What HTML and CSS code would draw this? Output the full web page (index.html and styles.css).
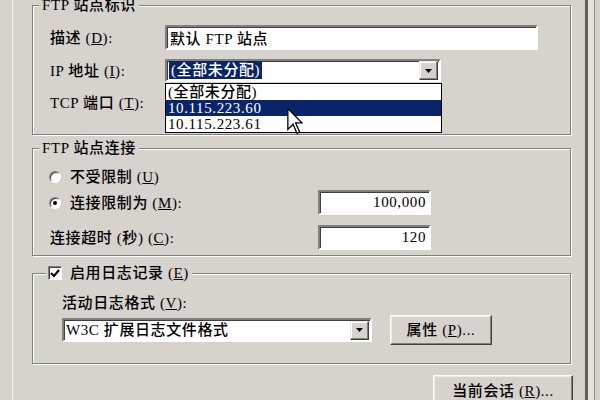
FILE: index.html
```html
<!DOCTYPE html>
<html lang="zh-CN">
<head>
<meta charset="utf-8">
<title>FTP 站点属性</title>
<link rel="stylesheet" href="styles.css">
</head>
<body>
<div class="screen">
  <div class="edge-left"></div>
  <div class="main">
    <fieldset class="group g1">
      <legend>FTP 站点标识</legend>
      <div class="g1-body">
        <label class="lbl">描述 (<u>D</u>):</label>
        <input class="field f-desc" type="text" value="默认 FTP 站点" readonly>
        <label class="lbl">IP 地址 (<u>I</u>):</label>
        <div class="combo c-ip" role="combobox">
          <div class="combo-text"><span class="hl">(全部未分配)</span></div>
          <div class="arrow"><svg width="7" height="4" viewBox="0 0 7 4"><polygon points="0,0 7,0 3.5,4" fill="#000"/></svg></div>
          <div class="dropdown" role="listbox">
            <div class="item">(全部未分配)</div>
            <div class="item sel">10.115.223.60</div>
            <div class="item">10.115.223.61</div>
          </div>
        </div>
        <label class="lbl">TCP 端口 (<u>T</u>):</label>
        <input class="field f-port" type="text" value="21" readonly>
      </div>
    </fieldset>

    <fieldset class="group g2">
      <legend>FTP 站点连接</legend>
      <div class="g2-body">
        <div class="row r1">
          <span class="radio"><span class="circle"></span>不受限制 (<u>U</u>)</span>
        </div>
        <div class="row r2">
          <span class="radio col1"><span class="circle on"></span>连接限制为 (<u>M</u>):</span>
          <input class="field num" type="text" value="100,000" readonly>
        </div>
        <div class="row r3">
          <label class="lbl col1">连接超时 (秒) (<u>C</u>):</label>
          <input class="field num" type="text" value="120" readonly>
        </div>
      </div>
    </fieldset>

    <fieldset class="group g3">
      <legend><span class="check"><svg width="10" height="9" viewBox="0 0 10 9"><polyline points="1,4 4,7 9,1" fill="none" stroke="#000" stroke-width="2"/></svg></span>启用日志记录 (<u>E</u>)</legend>
      <div class="g3-body">
        <label class="lbl">活动日志格式 (<u>V</u>):</label>
        <div class="row r-log">
          <div class="combo c-log" role="combobox">
            <div class="combo-text">W3C 扩展日志文件格式</div>
            <div class="arrow"><svg width="7" height="4" viewBox="0 0 7 4"><polygon points="0,0 7,0 3.5,4" fill="#000"/></svg></div>
          </div>
          <button class="btn b-prop" type="button">属性 (<u>P</u>)...</button>
        </div>
      </div>
    </fieldset>

    <div class="bottom-row">
      <button class="btn b-sess" type="button">当前会话 (<u>R</u>)...</button>
    </div>
  </div>
  <div class="edge-right"></div>

  <svg class="cursor" width="16" height="26" viewBox="0 0 12 20">
    <path d="M0.5,0.5 L0.5,16.5 L4.5,12.5 L7.5,19.5 L9.5,18.5 L6.5,11.5 L11.5,11.5 Z" fill="#fff" stroke="#000" stroke-width="1"/>
  </svg>
</div>
</body>
</html>
```

FILE: styles.css
```css
* { box-sizing: border-box; }

body {
  margin: 0;
  background: #d6d3cd;
  font-family: "Liberation Serif", "Noto Sans CJK SC", serif;
  font-size: 15px;
  font-weight: 500;
  letter-spacing: 0.6px;
  color: #000;
}

.screen {
  position: relative;
  display: flex;
  width: 600px;
  height: 400px;
  overflow: hidden;
}

.edge-left {
  flex: none;
  width: 13px;
  border-right: 1px solid #f3f2ee;
}

.main {
  flex: none;
  width: 541px;
  margin-left: 19px;
  display: flex;
  flex-direction: column;
}

.edge-right {
  flex: none;
  width: 10px;
  margin-left: 12px;
  border-left: 3px solid #5e5e5e;
  border-right: 1px solid #8c8c8c;
  background: #e4e2dd;
}

u { text-decoration: underline; text-underline-offset: 1px; }

/* group boxes */
.group {
  margin: 0;
  padding: 0;
  width: 539px;
  min-width: 0;
  border: 1px solid #808080;
  box-shadow: 1px 1px 0 #fff, inset 1px 1px 0 #fff;
}

.group legend {
  padding: 0 3px;
  margin-left: 6px;
  height: 16px;
  line-height: 16px;
  background: #d6d3cd;
}

.g1 { margin-top: -3px; }
.g2 { margin-top: 5px; }
.g3 { margin-top: 9px; }

.lbl { line-height: 16px; white-space: nowrap; }

/* group 1 */
.g1-body {
  padding: 12px 0 20px 17px;
  display: grid;
  grid-template-columns: 115px auto;
  row-gap: 9px;
  align-items: center;
  justify-items: start;
}

.field {
  font: inherit;
  letter-spacing: inherit;
  color: #000;
  background: #fff;
  border: 2px solid;
  border-color: #808080 #fff #fff #808080;
  box-shadow: inset 1px 1px 0 #404040;
  padding: 0 3px;
  margin: 0;
  outline: none;
}

.f-desc { width: 373px; height: 25px; }
.f-port { width: 80px; height: 23px; }

.combo {
  position: relative;
  display: flex;
  align-items: center;
  background: #fff;
  border: 2px solid;
  border-color: #808080 #fff #fff #808080;
  box-shadow: inset 1px 1px 0 #404040;
  padding: 0 1px 0 1px;
}

.c-ip { width: 276px; height: 23px; }

.combo-text {
  flex: 1;
  padding-left: 1px;
  line-height: 17px;
  white-space: nowrap;
}

.hl {
  background: #0a246a;
  color: #fff;
  padding: 1px 2px;
}

.arrow {
  flex: none;
  width: 19px;
  height: 19px;
  display: flex;
  align-items: center;
  justify-content: center;
  background: #d6d3cd;
  border: 1px solid;
  border-color: #eceae5 #404040 #404040 #eceae5;
  box-shadow: inset -1px -1px 0 #808080, inset 1px 1px 0 #fff;
}

.dropdown {
  position: absolute;
  left: -2px;
  top: 22px;
  width: 277px;
  height: 50px;
  background: #fff;
  border: 1px solid #000;
  z-index: 2;
}

.item {
  height: 16px;
  line-height: 16px;
  padding-left: 2px;
  white-space: nowrap;
}

.item.sel { background: #0a246a; color: #fff; }

/* group 2 */
.g2-body {
  padding: 10px 0 5px 17px;
  display: flex;
  flex-direction: column;
}

.row { display: flex; align-items: center; }

.r1 { height: 22px; }
.r2 { height: 25px; margin-top: 2px; }
.r3 { height: 25px; margin-top: 10px; }

.col1 { width: 268px; flex: none; }

.radio {
  display: flex;
  align-items: center;
  line-height: 16px;
  white-space: nowrap;
}

.circle {
  flex: none;
  position: relative;
  width: 12px;
  height: 12px;
  margin-left: -1px;
  margin-right: 9px;
  border-radius: 50%;
  background: #fff;
  border: 1px solid;
  border-color: #808080 #fff #fff #808080;
  box-shadow: inset 1px 1px 0 #404040;
}

.circle.on::after {
  content: "";
  position: absolute;
  left: 3px;
  top: 3px;
  width: 4px;
  height: 4px;
  border-radius: 50%;
  background: #000;
}

.num {
  width: 113px;
  height: 25px;
  text-align: right;
  padding-right: 3px;
}

/* group 3 */
.g3 legend {
  margin-left: 13px;
  padding: 0 3px 0 2px;
  display: flex;
  align-items: center;
}

.check {
  flex: none;
  width: 14px;
  height: 14px;
  margin-right: 8px;
  display: flex;
  align-items: center;
  justify-content: center;
  background: #fff;
  border: 1px solid;
  border-color: #808080 #fff #fff #808080;
  box-shadow: inset 1px 1px 0 #404040;
}

.g3-body {
  padding: 14px 0 18px 29px;
  display: flex;
  flex-direction: column;
  align-items: flex-start;
}

.r-log { height: 30px; margin-top: 4px; }

.c-log { width: 310px; height: 24px; }

.btn {
  font: inherit;
  letter-spacing: inherit;
  color: #000;
  background: #d6d3cd;
  border: 1px solid;
  border-color: #fff #404040 #404040 #fff;
  box-shadow: inset -1px -1px 0 #808080, inset 1px 1px 0 #eceae5;
  padding: 0;
  margin: 0;
  line-height: 16px;
  white-space: nowrap;
}

.b-prop { width: 102px; height: 30px; margin-left: 18px; }

.bottom-row {
  display: flex;
  justify-content: flex-end;
  margin-top: 11px;
}

.b-sess { width: 140px; height: 32px; flex: none; }

.cursor {
  position: absolute;
  left: 287px;
  top: 108px;
  z-index: 5;
}
```
